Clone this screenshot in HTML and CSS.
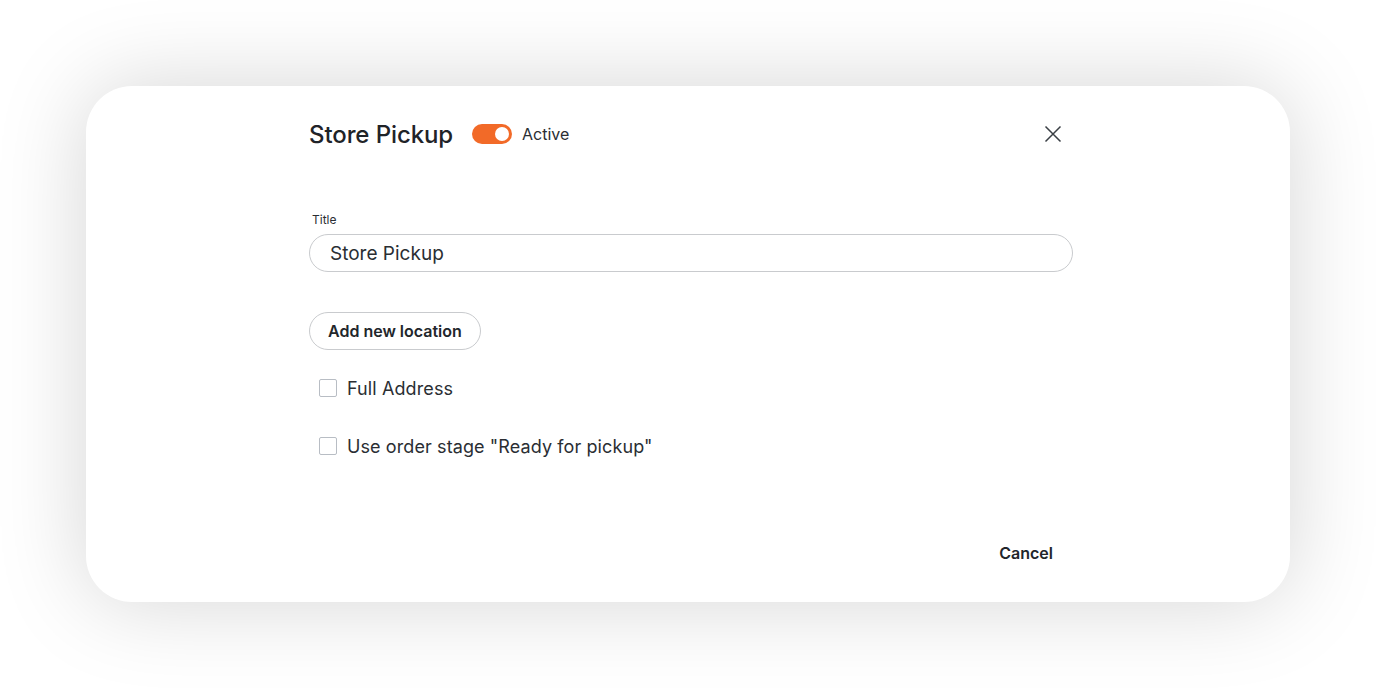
FILE: index.html
```html
<!DOCTYPE html>
<html lang="en">
<head>
<meta charset="utf-8">
<title>Store Pickup</title>
<link rel="stylesheet" href="styles.css">
</head>
<body>
<div class="stage">
  <div class="card">
    <div class="content">
      <div class="header">
        <h1 class="title">Store Pickup</h1>
        <span class="toggle"><span class="knob"></span></span>
        <span class="toggle-label">Active</span>
        <button class="close" aria-label="Close">
          <svg width="18" height="18" viewBox="0 0 18 18"><path d="M1.5 1.5 L16.5 16.5 M16.5 1.5 L1.5 16.5" stroke="#3a3f45" stroke-width="1.5" fill="none"/></svg>
        </button>
      </div>
      <label class="field-label">Title</label>
      <div class="input">Store Pickup</div>
      <button class="pill">Add new location</button>
      <div class="check-row"><span class="box"></span><span class="check-label">Full Address</span></div>
      <div class="check-row"><span class="box"></span><span class="check-label">Use order stage "Ready for pickup"</span></div>
      <div class="footer"><button class="cancel">Cancel</button></div>
    </div>
  </div>
</div>
</body>
</html>
```

FILE: styles.css
```css
* { box-sizing: border-box; }
html, body { margin: 0; padding: 0; background: #ffffff; }
body { font-family: Inter, "Liberation Sans", sans-serif; color: #22262b; }
.stage { width: 1376px; height: 688px; padding: 86px 86px 0 86px; }
.card {
  width: 1204px; height: 516px; background: #fff; border-radius: 46px;
  box-shadow: 0 0 90px rgba(0,0,0,0.17);
  padding: 0 217px 0 223px;
}
.content { display: flex; flex-direction: column; align-items: flex-start; padding-top: 35px; }
.header { display: flex; align-items: center; width: 100%; height: 26px; }
.title { margin: 0; font-size: 24px; font-weight: 500; letter-spacing: -0.1px; color: #1f2328; }
.toggle { margin-left: 19px; width: 40px; height: 20px; border-radius: 10px; background: #f26a28; position: relative; }
.knob { position: absolute; top: 3px; right: 3px; width: 14px; height: 14px; border-radius: 50%; background: #fff; }
.toggle-label { margin-left: 10px; font-size: 16px; color: #2a2e33; }
.close { margin-left: auto; margin-right: 11px; background: none; border: 0; padding: 0; width: 18px; height: 18px; display: flex; }
.field-label { margin-top: 65px; margin-left: 3px; font-size: 12px; color: #2a2e33; line-height: 15px; }
.input {
  margin-top: 7px; width: 100%; height: 38px; border: 1px solid #c9cbce; border-radius: 19px;
  padding-left: 20px; display: flex; align-items: center; font-size: 19px; color: #2a2e33;
}
.pill {
  margin-top: 40px; height: 38px; padding: 0 18px; border: 1px solid #c9cbce; border-radius: 19px;
  background: #fff; font-family: inherit; font-size: 16px; font-weight: 600; color: #22262b;
}
.check-row { display: flex; align-items: center; margin-left: 10px; height: 20px; }
.pill + .check-row { margin-top: 28px; }
.check-row + .check-row { margin-top: 38px; }
.box { width: 18px; height: 18px; border: 1.5px solid #b8bdc4; border-radius: 2px; }
.check-label { margin-left: 10px; font-size: 18px; letter-spacing: 0.1px; color: #2a2e33; }
.footer { width: 100%; display: flex; justify-content: flex-end; margin-top: 87px; }
.cancel { background: none; border: 0; padding: 0; margin-right: 20px; font-family: inherit; font-size: 16px; font-weight: 600; color: #22262b; }
```
